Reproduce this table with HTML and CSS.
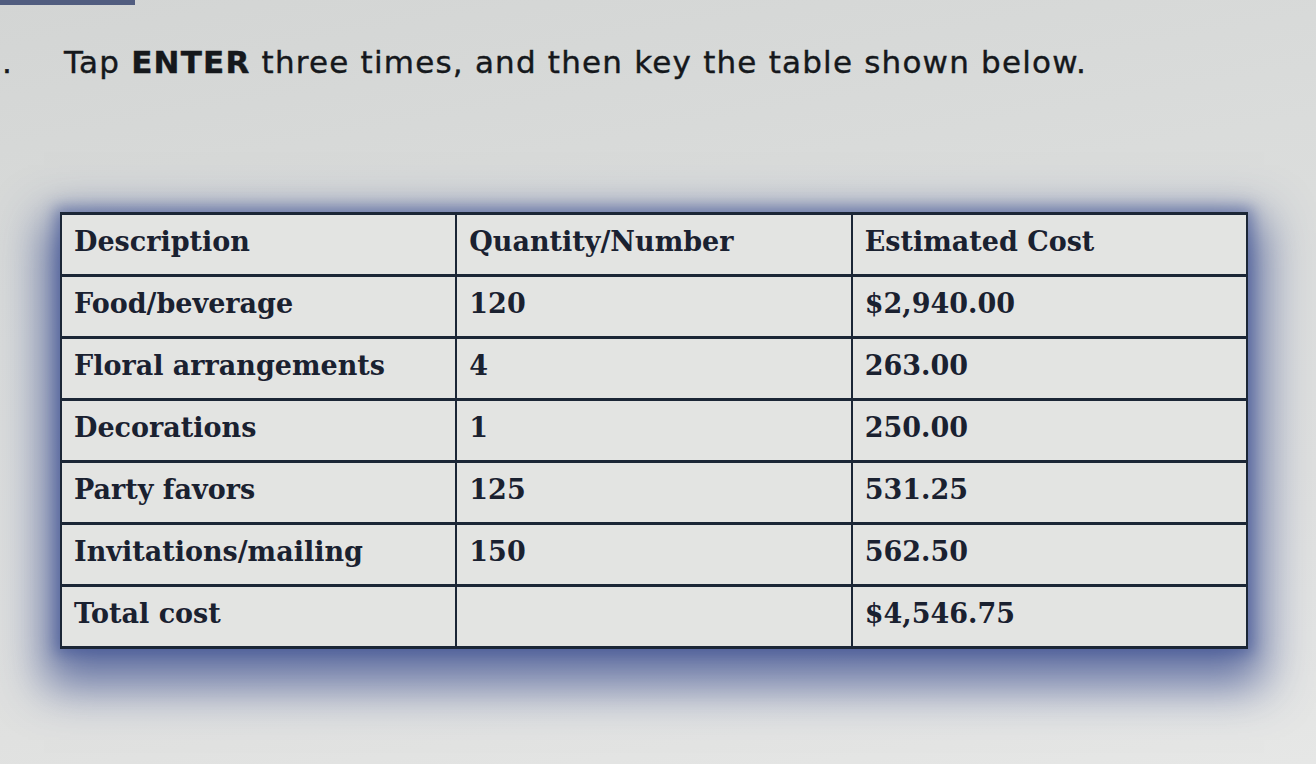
FILE: index.html
```html
<!DOCTYPE html>
<html>
<head>
<meta charset="utf-8">
<link rel="stylesheet" href="styles.css">
</head>
<body>
<div class="page">
  <div class="topbar"></div>
  <p class="instr"><span class="dot">.</span>Tap <b>ENTER</b> three times, and then key the table shown below.</p>
  <div class="table-wrap">
    <table class="tbl">
      <tr><td>Description</td><td>Quantity/Number</td><td>Estimated Cost</td></tr>
      <tr><td>Food/beverage</td><td>120</td><td>$2,940.00</td></tr>
      <tr><td>Floral arrangements</td><td>4</td><td>263.00</td></tr>
      <tr><td>Decorations</td><td>1</td><td>250.00</td></tr>
      <tr><td>Party favors</td><td>125</td><td>531.25</td></tr>
      <tr><td>Invitations/mailing</td><td>150</td><td>562.50</td></tr>
      <tr><td>Total cost</td><td></td><td>$4,546.75</td></tr>
    </table>
  </div>
</div>
</body>
</html>
```
FILE: styles.css
```css
html, body {
  margin: 0;
  padding: 0;
}
body {
  width: 1316px;
  height: 764px;
  overflow: hidden;
  background: linear-gradient(170deg, #d3d5d4 0%, #dadcdb 35%, #dfe0df 70%, #e6e7e6 100%);
}
.page {
  position: relative;
  height: 764px;
}
.topbar {
  height: 5px;
  width: 135px;
  background: #263463;
  opacity: 0.75;
}
.instr {
  margin: 37px 0 0 0;
  padding-left: 2px;
  font-family: "DejaVu Sans", Verdana, sans-serif;
  font-size: 31px;
  letter-spacing: 1.2px;
  color: #15181c;
  line-height: 40px;
  -webkit-text-stroke: 0.4px #15181c;
}
.instr b {
  font-weight: bold;
}
.dot {
  display: inline-block;
  width: 62px;
}
.table-wrap {
  margin: 130px 0 0 60px;
  width: 1188px;
}
.tbl {
  width: 1188px;
  border-collapse: collapse;
  table-layout: fixed;
  background: #e3e4e2;
  box-shadow: 0 22px 44px 16px rgba(48, 68, 138, 0.7), 0 0 14px 5px rgba(58, 78, 150, 0.5);
  font-family: "DejaVu Serif", "Liberation Serif", serif;
  font-weight: bold;
  font-size: 27px;
  color: #1a2130;
}
.tbl td {
  border: 2px solid #1b2636;
  border-top-width: 3px;
  border-bottom-width: 3px;
  height: 53px;
  padding: 0 12px 6px 12px;
  vertical-align: middle;
}
```
